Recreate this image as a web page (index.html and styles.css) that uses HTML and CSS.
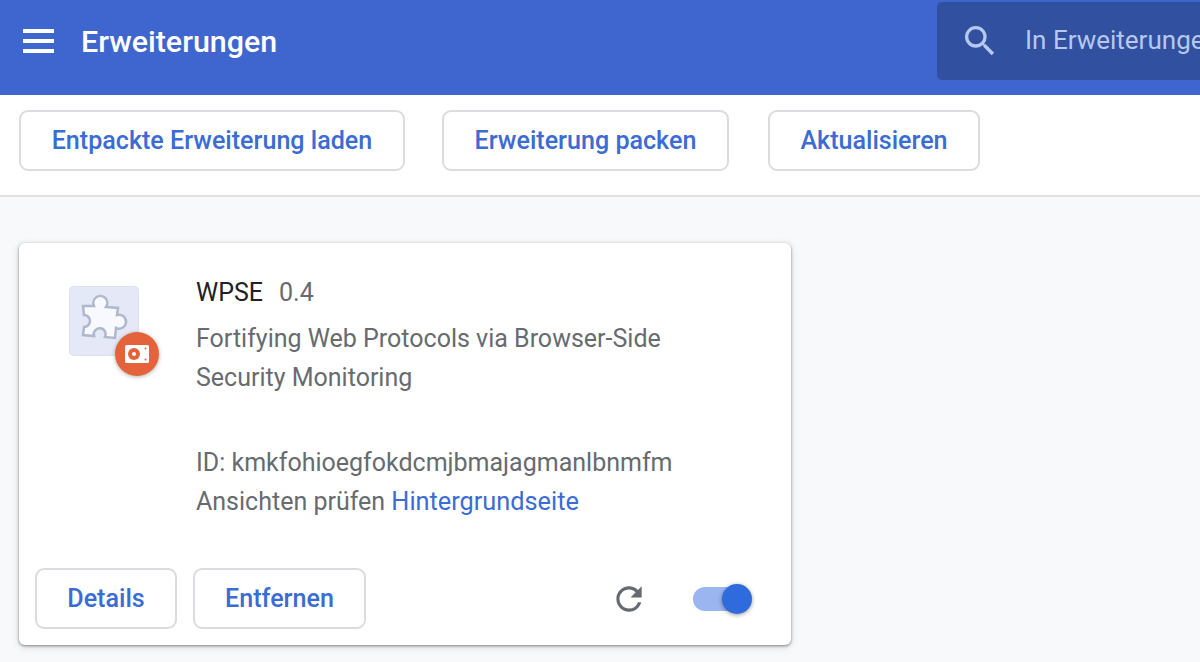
FILE: index.html
```html
<!DOCTYPE html>
<html lang="de">
<head>
    <meta charset="UTF-8">
    <title>Erweiterungen</title>
    <link rel="stylesheet" href="styles.css">
</head>
<body>
    <header class="topbar">
        <div class="topbar-left">
            <div class="menu-icon"><span></span><span></span><span></span></div>
            <h1>Erweiterungen</h1>
        </div>
        <div class="search">
            <svg class="search-icon" width="40" height="40" viewBox="0 0 24 24"><path d="M15.5 14h-.79l-.28-.27A6.47 6.47 0 0 0 16 9.5 6.5 6.5 0 1 0 9.5 16c1.61 0 3.09-.59 4.23-1.57l.27.28v.79l5 4.99L20.49 19l-4.99-5zm-6 0C7.01 14 5 11.99 5 9.5S7.01 5 9.5 5 14 7.01 14 9.5 11.99 14 9.5 14z"/></svg>
            <span class="search-text">In Erweiterungen suchen</span>
        </div>
    </header>

    <div class="toolbar">
        <button class="btn btn-load">Entpackte Erweiterung laden</button>
        <button class="btn btn-pack">Erweiterung packen</button>
        <button class="btn btn-update">Aktualisieren</button>
    </div>

    <main class="content">
        <div class="card">
            <div class="card-main">
                <div class="ext-icon">
                    <svg class="puzzle" width="70" height="70" viewBox="0 0 70 70">
                        <path d="M14 20 L25 20 A7 7 0 1 1 37 21 L49 22 L48 29 A7 7 0 1 1 47 42 L46 52 L36 51 A6 6 0 1 0 25 50 L14 49 L15 41 A6 6 0 1 0 15 29 Z"/>
                    </svg>
                    <span class="badge">
                        <svg width="24" height="18" viewBox="0 0 24 18">
                            <rect width="24" height="18" rx="1.500" fill="#fff"/>
                            <circle cx="9" cy="9" r="6" fill="#e4633a"/>
                            <circle cx="9" cy="9" r="2" fill="#fff"/>
                            <circle cx="20.500" cy="3.500" r="1" fill="#e4633a"/>
                            <circle cx="20.500" cy="14.500" r="1" fill="#e4633a"/>
                        </svg>
                    </span>
                </div>
                <div class="ext-info">
                    <div class="ext-title"><span class="ext-name">WPSE</span><span class="ext-version">0.4</span></div>
                    <p class="ext-desc">Fortifying Web Protocols via Browser-Side Security Monitoring</p>
                    <p class="ext-id">ID: kmkfohioegfokdcmjbmajagmanlbnmfm</p>
                    <p class="ext-views">Ansichten prüfen <a href="#">Hintergrundseite</a></p>
                </div>
            </div>
            <div class="card-footer">
                <div class="card-buttons">
                    <button class="btn btn-details">Details</button>
                    <button class="btn btn-remove">Entfernen</button>
                </div>
                <div class="card-controls">
                    <svg class="reload" width="38" height="38" viewBox="0 0 24 24"><path d="M17.650 6.350A7.958 7.958 0 0 0 12 4c-4.420 0-7.990 3.580-7.990 8s3.570 8 7.990 8c3.730 0 6.840-2.550 7.730-6h-2.080A5.990 5.990 0 0 1 12 18c-3.310 0-6-2.690-6-6s2.690-6 6-6c1.660 0 3.140.69 4.220 1.780L13 11h7V4l-2.350 2.350z"/></svg>
                    <div class="toggle"><span class="toggle-knob"></span></div>
                </div>
            </div>
        </div>
    </main>
</body>
</html>
```

FILE: styles.css
```css
html, body {
    height: 662px;
    overflow: hidden;
}
body {
    font-family: Roboto, sans-serif;
    margin: 0;
    background: #f8f9fa;
    color: #676b6f;
}
.topbar {
    height: 95px;
    box-sizing: border-box;
    background: #3f66cf;
    display: flex;
    justify-content: space-between;
    padding: 2px 0 15px 23px;
}
.topbar-left {
    display: flex;
    align-items: center;
    gap: 27px;
}
.menu-icon {
    width: 31px;
    height: 24px;
    display: flex;
    flex-direction: column;
    justify-content: space-between;
}
.menu-icon span {
    height: 4px;
    background: white;
}
h1 {
    margin: 0;
    font-size: 30.4px;
    font-weight: 500;
    color: white;
}
.search {
    width: 263px;
    background: #3150a0;
    border-radius: 5px 0 0 5px;
    display: flex;
    align-items: center;
    gap: 25px;
    padding-left: 23px;
    box-sizing: border-box;
    overflow: hidden;
    white-space: nowrap;
}
.search-icon {
    flex: none;
    fill: #b6c8ee;
}
.search-text {
    font-size: 26px;
    color: #b6c8ee;
    padding-bottom: 3px;
}
.toolbar {
    height: 102px;
    box-sizing: border-box;
    background: white;
    border-bottom: 2px solid #e0e0e0;
    display: flex;
    align-items: flex-start;
    padding: 15px 0 0 19px;
}
.btn {
    font-family: Roboto, sans-serif;
    font-size: 25.1px;
    font-weight: 500;
    color: #3b6cd4;
    background: white;
    border: 2px solid #dadce0;
    border-radius: 9px;
    height: 61px;
    padding: 0;
}
.btn-load { width: 386px; }
.btn-pack { width: 287px; margin-left: 37px; }
.btn-update { width: 212px; margin-left: 39px; }
.btn-details { width: 142px; }
.btn-remove { width: 173px; }
.content {
    padding: 46px 0 0 19px;
}
.card {
    width: 772px;
    height: 402px;
    box-sizing: border-box;
    background: white;
    border-radius: 6px;
    box-shadow: 0 1px 3px rgba(60, 64, 67, 0.6), 0 2px 8px rgba(60, 64, 67, 0.15);
    display: flex;
    flex-direction: column;
    justify-content: space-between;
    padding: 26px 42px 16px 16px;
}
.card-main {
    display: flex;
    gap: 57px;
    padding-left: 34px;
}
.ext-icon {
    position: relative;
    width: 70px;
    height: 70px;
    margin-top: 17px;
    flex: none;
    background: #e4e8f7;
    border-radius: 5px;
    box-shadow: inset 0 0 0 1px #dde2f2;
}
.puzzle {
    display: block;
    fill: #f8f9fe;
    stroke: #b0b8cd;
    stroke-width: 2.5;
    filter: blur(0.5px);
}
.badge {
    position: absolute;
    right: -20px;
    bottom: -20px;
    width: 44px;
    height: 44px;
    border-radius: 50%;
    background: #e4633a;
    box-shadow: 0 1px 4px rgba(0, 0, 0, 0.3);
    display: flex;
    align-items: center;
    justify-content: center;
}
.ext-info {
    font-size: 25px;
    line-height: 38.5px;
    padding-top: 5px;
}
.ext-title {
    display: flex;
    gap: 16px;
    height: 46px;
}
.ext-name {
    color: #202124;
}
.ext-desc {
    margin: 0 0 47px;
    width: 520px;
}
.ext-id, .ext-views {
    margin: 0;
    white-space: nowrap;
}
.ext-views a {
    color: #3b6cd4;
    font-size: 25.3px;
    text-decoration: none;
}
.card-footer {
    display: flex;
    justify-content: space-between;
    align-items: center;
}
.card-buttons {
    display: flex;
    gap: 16px;
}
.card-controls {
    display: flex;
    align-items: center;
    gap: 45px;
}
.reload {
    fill: #666a6e;
}
.toggle {
    position: relative;
    width: 56px;
    height: 24px;
    border-radius: 12px;
    background: #9ab5f0;
}
.toggle-knob {
    position: absolute;
    right: -3px;
    top: -3px;
    width: 30px;
    height: 30px;
    border-radius: 50%;
    background: #2f6bdc;
    box-shadow: 0 1px 4px rgba(0, 0, 0, 0.4);
}
```
